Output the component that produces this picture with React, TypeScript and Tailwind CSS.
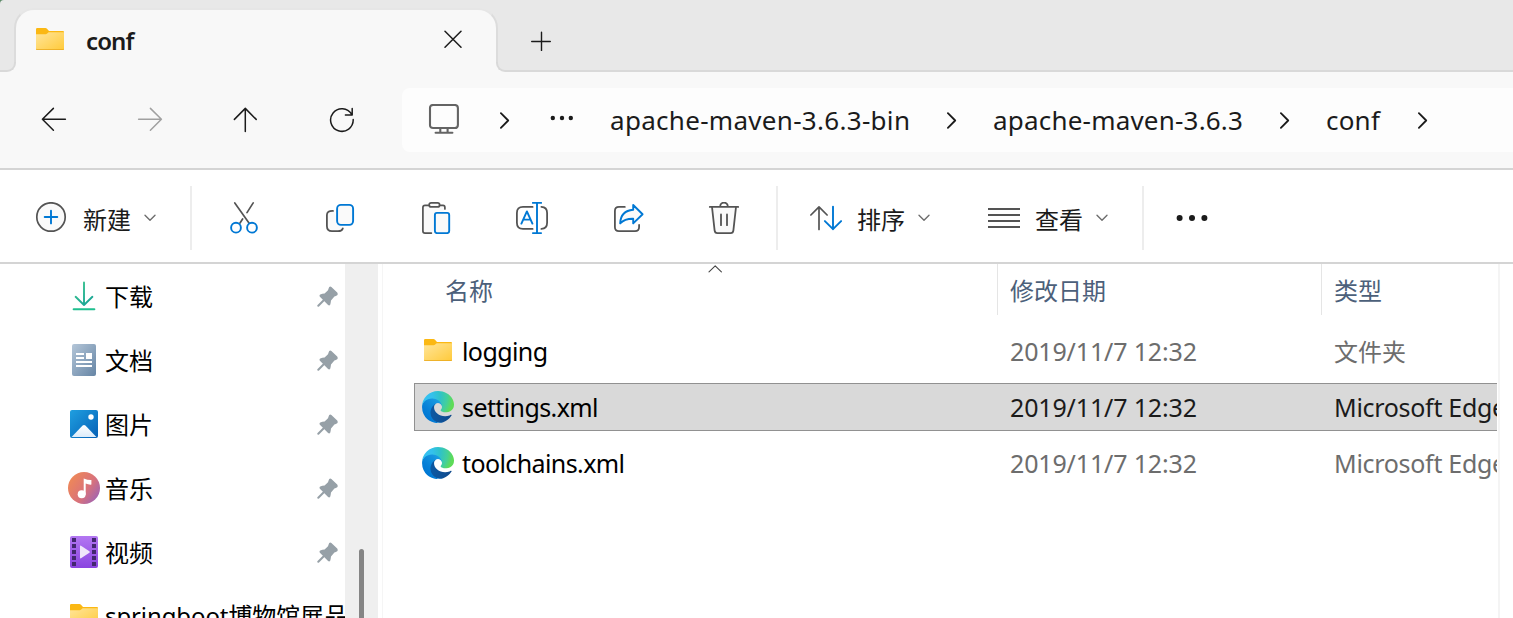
import React from "react";

type IconProps = { children: React.ReactNode; className?: string; w?: number; h?: number };

function Icon({ children, className = "", w = 32, h = 32 }: IconProps) {
  return (
    <svg
      width={w}
      height={h}
      viewBox={`0 0 ${w} ${h}`}
      fill="none"
      strokeLinecap="round"
      strokeLinejoin="round"
      className={`block shrink-0 ${className}`}
    >
      {children}
    </svg>
  );
}

const GREY = "#545454";
const BLUE = "#0078d4";

function FolderIcon({ className = "" }: { className?: string }) {
  return (
    <Icon w={28} h={22} className={className}>
      <defs>
        <linearGradient id="folder" x1="0" y1="0" x2="1" y2="1">
          <stop offset="0" stopColor="#ffe59a" />
          <stop offset="1" stopColor="#ffca3a" />
        </linearGradient>
      </defs>
      <path d="M0 1.2Q0 0 1.2 0H9.5Q10.3 0 11 .7L13 3H27Q28 3 28 4V8H0Z" fill="#fbb813" />
      <path d="M0 6.2H9.6Q10.5 6.2 11.2 5.5L12.6 4.2H28V21Q28 22 27 22H1Q0 22 0 21Z" fill="url(#folder)" />
      <path d="M0 20.6Q.2 21.2 1 21.2H27Q27.8 21.2 28 20.6V21Q28 22 27 22H1Q0 22 0 21Z" fill="#e9a81c" />
    </Icon>
  );
}

function EdgeIcon({ className = "" }: { className?: string }) {
  return (
    <svg width="32" height="32" viewBox="0 0 256 256" className={`block shrink-0 ${className}`}>
      <defs>
        <linearGradient id="edgeDark" x1="63" y1="177" x2="241" y2="177" gradientUnits="userSpaceOnUse">
          <stop offset="0" stopColor="#0c59a4" />
          <stop offset="1" stopColor="#114a8b" />
        </linearGradient>
        <linearGradient id="edgeBlue" x1="157" y1="100" x2="46" y2="221" gradientUnits="userSpaceOnUse">
          <stop offset="0" stopColor="#1b9de2" />
          <stop offset=".16" stopColor="#1595df" />
          <stop offset=".67" stopColor="#0680d7" />
          <stop offset="1" stopColor="#0078d4" />
        </linearGradient>
        <radialGradient id="edgeTop" cx="26" cy="47" r="220" gradientUnits="userSpaceOnUse">
          <stop offset="0" stopColor="#35c1f1" />
          <stop offset=".25" stopColor="#34c1ed" />
          <stop offset=".55" stopColor="#2fc2c8" />
          <stop offset=".8" stopColor="#43cf9c" />
          <stop offset="1" stopColor="#5edb58" />
        </radialGradient>
      </defs>
      <path
        d="M231.1 190.5a93.7 93.7 0 0 1-10.6 4.7 101.9 101.9 0 0 1-35.9 6.5c-47.3 0-88.5-32.6-88.5-74.3a31.5 31.5 0 0 1 16.4-27.3c-42.8 1.8-53.8 46.4-53.8 72.5 0 73.9 68.1 81.4 82.8 81.4 7.9 0 19.8-2.3 27-4.6l1.3-.4a128.3 128.3 0 0 0 66.6-52.8 4 4 0 0 0-5.3-5.7z"
        fill="url(#edgeDark)"
      />
      <path
        d="M105.7 241.4A79.2 79.2 0 0 1 83 220.1a80.7 80.7 0 0 1 29.7-119.4c3.1-1.5 8.5-4.1 15.5-4a32.4 32.4 0 0 1 25.7 13 31.9 31.9 0 0 1 6.4 18.7c0-.2 24.5-79.6-80-79.6-43.9 0-80 41.6-80 78.2a130.2 130.2 0 0 0 12.1 56 128 128 0 0 0 156.4 67.1 75.6 75.6 0 0 1-62.8-8.6z"
        fill="url(#edgeBlue)"
      />
      <path
        d="M152.3 148.9c-.8 1-3.3 2.5-3.3 5.6 0 2.6 1.7 5.1 4.7 7.2 14.4 10 41.5 8.7 41.6 8.7a59.6 59.6 0 0 0 30.3-8.3 61.4 61.4 0 0 0 30.4-52.9c.3-22.4-8-37.3-11.3-43.9C223.5 23.8 177.7 0 128 0A128 128 0 0 0 0 126.2c.5-36.5 36.8-66 80-66 3.5 0 23.5.3 42 10 16.3 8.6 24.9 18.9 30.9 29.2 6.2 10.7 7.2 24.1 7.2 29.5s-2.7 13.3-7.8 20z"
        fill="url(#edgeTop)"
      />
    </svg>
  );
}

function PinIcon() {
  return (
    <Icon w={21} h={21}>
      <path d="M1.3 19.7L8 13" stroke="#96a0a7" strokeWidth="2" />
      <path
        d="M12.2 1Q13.3 .1 14.4 1L20.2 6.6Q21.2 8 20.2 9.2Q18.8 9.8 17.4 10.6L14 14.6Q13.8 16.8 13.2 18.8Q12.3 19.9 11.1 19L2.9 10.8Q2 9.6 3.2 8.6Q5.4 7.8 7.6 7.6L11 4.2Q11.6 2.4 12.2 1Z"
        fill="#96a0a7"
      />
    </Icon>
  );
}

function Chevron({ className = "" }: { className?: string }) {
  return (
    <Icon w={10} h={17} className={className}>
      <path d="M.9 1.2L8.2 8.5L.9 15.8" stroke="#1b1b1b" strokeWidth="1.8" />
    </Icon>
  );
}

function SmallChevron() {
  return (
    <Icon w={12} h={8} className="ml-3">
      <path d="M1 1.2L6 6.2L11 1.2" stroke="#6d6d6d" strokeWidth="1.4" />
    </Icon>
  );
}

function Separator() {
  return <div className="h-16 w-0.5 shrink-0 bg-[#ededed]" />;
}

function TabStrip() {
  return (
    <div className="relative flex h-[72px] flex-col bg-[#f8f8f8]">
      <div className="h-[62px] bg-[#e8e8e8] pt-2">
        <div className="flex h-[54px] items-start">
          <div className="ml-3.5 flex h-[54px] w-[484px] items-start rounded-t-[20px] border-2 border-b-0 border-[#dcdcdc] border-t-[#e6e6e6] bg-[#f8f8f8]">
            <FolderIcon className="mt-[18px] ml-5" />
            <span className="mt-[13px] ml-[22px] w-[358px] text-[24px] leading-[36px] font-semibold tracking-[-0.9px] text-[#1b1b1b]">
              conf
            </span>
            <Icon w={18} h={18} className="mt-5">
              <path d="M1 1.2L17 17.2M17 1.2L1 17.2" stroke="#1b1b1b" strokeWidth="1.5" />
            </Icon>
          </div>
          <Icon w={20} h={20} className="mt-[23px] ml-[33px]">
            <path d="M.7 10.5H19.3M10.5 1.2V19.6" stroke="#1b1b1b" strokeWidth="1.4" />
          </Icon>
        </div>
      </div>
      <div className="flex h-2.5">
        <div className="w-4 rounded-br-[9px] border-r-2 border-b-2 border-[#d9d9d9] bg-[#e8e8e8]" />
        <div className="w-[480px]" />
        <div className="flex-1 rounded-bl-[9px] border-b-2 border-l-2 border-[#d9d9d9] bg-[#e8e8e8]" />
      </div>
      <div className="absolute top-0 left-0 h-2 w-1 bg-[#5c8a68]">
        <div className="h-full w-full rounded-tl-[12px] bg-[#e8e8e8]" />
      </div>
    </div>
  );
}

function NavBar() {
  return (
    <div className="flex h-[98px] items-start border-b-2 border-[#d4d4d4] bg-[#f8f8f8] pt-4">
      <div className="flex w-[402px] shrink-0 items-center pt-[19px] pl-[41px]">
        <Icon w={26} h={26}>
          <path d="M1.4 12.3H24.4M12.4 1.4L1.4 12.3L12.4 23.2" stroke="#1b1b1b" strokeWidth="1.5" />
        </Icon>
        <Icon w={26} h={26} className="ml-[70px]">
          <path d="M1.6 12.3H24.4M13.4 1.4L24.4 12.3L13.4 23.2" stroke="#a0a0a0" strokeWidth="1.5" />
        </Icon>
        <Icon w={26} h={26} className="ml-[69px]">
          <path d="M13.3 1.4V24.4M2.4 12.4L13.3 1.4L24.2 12.4" stroke="#1b1b1b" strokeWidth="1.5" />
        </Icon>
        <Icon w={26} h={26} className="ml-[71px]">
          <path d="M24.2 12.6A11.3 11.3 0 1 1 22.6 7.2M23.2 1.6V7.9H16.4" stroke="#1b1b1b" strokeWidth="1.5" />
        </Icon>
      </div>
      <div className="flex h-16 flex-1 items-center overflow-hidden rounded-l-lg bg-[#fdfdfd] pl-[26px] text-[26px] whitespace-nowrap text-[#1b1b1b]">
        <Icon>
          <path
            d="M6 1H26.8Q29.9 1 29.9 4.1V20.9Q29.9 24 26.8 24H5.1Q2 24 2 20.9V4.1Q2 1 5.1 1ZM12.3 24V28.6M19.6 24V28.6M7.6 28.8H24.4"
            stroke="#646464"
            strokeWidth="2.1"
          />
        </Icon>
        <Chevron className="ml-[40px]" />
        <Icon w={24} h={6} className="mb-1 ml-[40px]">
          <g fill="#1b1b1b">
            <circle cx="2.8" cy="3" r="2.2" />
            <circle cx="12" cy="3" r="2.2" />
            <circle cx="20.8" cy="3" r="2.2" />
          </g>
        </Icon>
        <span className="ml-[36px] w-[301px] tracking-[0.3px]">apache-maven-3.6.3-bin</span>
        <Chevron className="ml-[36px]" />
        <span className="ml-[36px] w-[250px] tracking-[0.2px]">apache-maven-3.6.3</span>
        <Chevron className="ml-[37px]" />
        <span className="ml-[36px] w-[55px] tracking-[0.2px]">conf</span>
        <Chevron className="ml-[37px]" />
      </div>
    </div>
  );
}

function Toolbar() {
  return (
    <div className="flex h-[94px] items-center border-b-2 border-[#d4d4d4] bg-white pt-1 text-[24px] text-[#1b1b1b]">
      <Icon className="ml-[35px]">
        <circle cx="16" cy="15" r="14.2" stroke={GREY} strokeWidth="1.7" fill="#fafafa" />
        <path d="M16 8.8V21.4M9.7 15H22.3" stroke={BLUE} strokeWidth="1.9" />
      </Icon>
      <span className="mt-[3px] ml-4 w-[49px] leading-9">新建</span>
      <SmallChevron />
      <div className="ml-[34px]">
        <Separator />
      </div>
      <Icon className="ml-9">
        <path d="M6.8 .9L21 21M25.2 .9L19 10.6M14.6 17L12 21" stroke={GREY} strokeWidth="1.7" />
        <circle cx="8" cy="25.7" r="4.9" stroke={BLUE} strokeWidth="1.9" />
        <circle cx="24" cy="25.7" r="4.9" stroke={BLUE} strokeWidth="1.9" />
      </Icon>
      <Icon className="ml-16">
        <path d="M9 8.9Q2.9 8.7 2.9 13V24Q2.9 29.1 8 29.1H14Q18 29.1 18.8 26.4" stroke={GREY} strokeWidth="1.8" fill="#fafafa" />
        <rect x="13.1" y="2.9" width="16" height="20" rx="3.8" stroke={BLUE} strokeWidth="1.9" fill="#fafafa" />
      </Icon>
      <Icon className="ml-16">
        <path d="M11.4 31.1H5Q2.9 31.1 2.9 29V5.4Q2.9 3.3 5 3.3H23Q24.9 3.3 24.9 5.4V7" stroke={GREY} strokeWidth="1.7" fill="#fafafa" />
        <rect x="9.2" y=".9" width="10.4" height="4" rx="2" stroke={GREY} strokeWidth="1.7" fill="#fafafa" />
        <rect x="14.9" y="10.9" width="14.3" height="20.2" rx="2" stroke={BLUE} strokeWidth="1.9" fill="#fafafa" />
      </Icon>
      <Icon className="ml-16">
        <path
          d="M16.6 4.9H7Q.9 4.9 .9 11V20.8Q.9 26.9 7 26.9H16.6M25.4 4.9Q31.1 5.1 31.1 11V20.8Q31.1 26.7 25.4 26.9"
          stroke={GREY}
          strokeWidth="1.8"
        />
        <path d="M16.9 .9H25.1M21 .9V31.1M16.9 31.1H25.1M5.4 21.6L10.9 9.4L16.4 21.6M7.2 17.6H14.6" stroke={BLUE} strokeWidth="1.9" />
      </Icon>
      <Icon className="ml-16">
        <path d="M12.8 4.9H7Q2.9 4.9 2.9 9V25Q2.9 29.1 7 29.1H23Q27.1 29.1 27.1 25V23" stroke={GREY} strokeWidth="1.8" />
        <path
          d="M21.2 3L30.6 12.2L21.2 21.4V16.8Q12.8 16.6 8.2 21.4Q8.6 8.8 21.2 7.8Z"
          stroke={BLUE}
          strokeWidth="1.9"
          fill="#fafafa"
        />
      </Icon>
      <Icon className="ml-16">
        <path
          d="M4 5L6.6 28.4Q6.9 31.1 9.4 31.1H22.6Q25.1 31.1 25.4 28.4L28 5"
          stroke={GREY}
          strokeWidth="1.8"
          fill="#fafafa"
        />
        <path d="M1.8 4.9H30.2M12.2 4.4A3.8 3.8 0 0 1 19.8 4.4M13 12.4V23.2M19 12.4V23.2" stroke={GREY} strokeWidth="1.8" />
      </Icon>
      <div className="ml-9">
        <Separator />
      </div>
      <Icon className="ml-8">
        <path d="M9 4.9V27.4M.9 13L9 4.9L17.1 13" stroke={GREY} strokeWidth="1.7" />
        <path d="M23 4.6V27.2M14.9 19.1L23 27.2L31.1 19.1" stroke={BLUE} strokeWidth="1.9" />
      </Icon>
      <span className="mt-[3px] ml-[15px] w-[49px] leading-9">排序</span>
      <SmallChevron />
      <Icon className="ml-[58px]">
        <path d="M0 7H32M0 13H32M0 19H32M0 25H32" stroke={GREY} strokeWidth="1.9" strokeLinecap="butt" />
      </Icon>
      <span className="mt-[3px] ml-[15px] w-[49px] leading-9">查看</span>
      <SmallChevron />
      <div className="ml-[34px]">
        <Separator />
      </div>
      <Icon className="ml-8">
        <g fill="#1b1b1b">
          <circle cx="3.6" cy="16" r="3" />
          <circle cx="16" cy="16" r="3" />
          <circle cx="28.4" cy="16" r="3" />
        </g>
      </Icon>
    </div>
  );
}

const downloads = (
  <Icon>
    <defs>
      <linearGradient id="dl" x1="6" y1="2" x2="26" y2="24" gradientUnits="userSpaceOnUse">
        <stop offset="0" stopColor="#41c98e" />
        <stop offset="1" stopColor="#13a096" />
      </linearGradient>
    </defs>
    <path d="M16 2.5V25M7.6 16.8L16 25L24.4 16.8" stroke="url(#dl)" strokeWidth="1.9" />
    <path d="M5.6 29.2H26.4" stroke="#1fbf8f" strokeWidth="1.9" />
  </Icon>
);

const documents = (
  <Icon>
    <defs>
      <linearGradient id="doc" x1="0" y1="0" x2="1" y2="1">
        <stop offset="0" stopColor="#b4c6d8" />
        <stop offset="1" stopColor="#6685a5" />
      </linearGradient>
    </defs>
    <rect x="4" y="0" width="24" height="32" rx="2" fill="url(#doc)" />
    <path d="M8 10H16M8 14H16M8 18H24M8 22H24" stroke="#fff" strokeWidth="2" strokeLinecap="butt" />
    <rect x="18" y="9" width="6" height="6" fill="#fff" />
  </Icon>
);

const pictures = (
  <Icon>
    <defs>
      <linearGradient id="pic" x1="0" y1="0" x2="1" y2="1">
        <stop offset="0" stopColor="#1f9fe0" />
        <stop offset="1" stopColor="#0560b6" />
      </linearGradient>
      <linearGradient id="hill" x1="0" y1="0" x2="0" y2="1">
        <stop offset="0" stopColor="#fff" />
        <stop offset="1" stopColor="#dcecfa" />
      </linearGradient>
    </defs>
    <rect x="2" y="2" width="28" height="28" rx="2" fill="url(#pic)" />
    <path d="M3.6 29L14.6 17.6Q16 16.3 17.4 17.6L28.4 29Z" fill="url(#hill)" />
    <circle cx="23" cy="9" r="2.7" fill="#fff" />
  </Icon>
);

const music = (
  <Icon>
    <defs>
      <linearGradient id="mus" x1="0" y1=".2" x2="1" y2=".9">
        <stop offset="0" stopColor="#f08a55" />
        <stop offset=".55" stopColor="#d9727a" />
        <stop offset="1" stopColor="#9561bd" />
      </linearGradient>
    </defs>
    <circle cx="16" cy="16" r="16" fill="url(#mus)" />
    <circle cx="13.7" cy="22.3" r="4" fill="#fff" />
    <path d="M15.7 6.4Q20 8.2 23.4 8V12.6Q20.4 12.8 17.7 11.6V22.6H15.7Z" fill="#fff" />
  </Icon>
);

const videos = (
  <Icon>
    <defs>
      <linearGradient id="vid" x1="0" y1="0" x2="0" y2="1">
        <stop offset="0" stopColor="#b377f2" />
        <stop offset="1" stopColor="#8a44e0" />
      </linearGradient>
    </defs>
    <rect x="2" y="0" width="28" height="32" rx="2" fill="url(#vid)" />
    <path d="M6 2V30M26 2V30" stroke="#43276f" strokeWidth="4" strokeDasharray="4 2" strokeLinecap="butt" />
    <path d="M12 10.4Q12 9.2 13 9.8L21.4 15.2Q22.2 16 21.4 16.8L13 22.2Q12 22.8 12 21.6Z" fill="#efe6fa" />
  </Icon>
);

const quickAccess = [
  { name: "下载", icon: downloads },
  { name: "文档", icon: documents },
  { name: "图片", icon: pictures },
  { name: "音乐", icon: music },
  { name: "视频", icon: videos },
];

function Sidebar() {
  return (
    <div className="flex w-[383px] shrink-0 overflow-hidden border-r border-[#f5f5f5]">
      <div className="w-[345px] shrink-0 overflow-hidden">
        {quickAccess.map((item) => (
          <div key={item.name} className="flex h-16 items-center pl-[68px]">
            {item.icon}
            <span className="mt-px ml-[5px] w-[212px] text-[24px] text-black">{item.name}</span>
            <PinIcon />
          </div>
        ))}
        <div className="flex h-16 items-center pl-[70px] whitespace-nowrap">
          <FolderIcon className="mb-[3px]" />
          <span className="ml-[7px] text-[24px] tracking-[-0.1px] text-black">springboot博物馆展品</span>
        </div>
      </div>
      <div className="flex w-[33px] shrink-0 justify-center bg-[#efefef] pt-[285px]">
        <div className="h-40 w-[5px] rounded-full bg-[#858585]" />
      </div>
    </div>
  );
}

const files = [
  { name: "logging", date: "2019/11/7 12:32", kind: "文件夹", folder: true, selected: false },
  { name: "settings.xml", date: "2019/11/7 12:32", kind: "Microsoft Edge", folder: false, selected: true },
  { name: "toolchains.xml", date: "2019/11/7 12:32", kind: "Microsoft Edge", folder: false, selected: false },
];

function FileList() {
  return (
    <div className="flex w-[1117px] shrink-0 flex-col overflow-hidden border-r-2 border-[#f4f4f4] pl-[31px]">
      <div className="relative flex h-[51px] text-[24px] leading-[54px] text-[#4c607a]">
        <span className="w-[583px] pl-[31px]">名称</span>
        <span className="w-[324px] border-l border-[#e5e5e5] pl-3">修改日期</span>
        <span className="w-[174px] border-l border-[#e5e5e5] pl-3">类型</span>
        <Icon w={14} h={8} className="absolute top-px left-[294px]">
          <path d="M1 6.8L7.2 .9L13.4 6.8" stroke="#444" strokeWidth="1.1" />
        </Icon>
      </div>
      <div className="mt-3 mr-px flex flex-col gap-2">
        {files.map((file) => (
          <div
            key={file.name}
            className={`flex h-12 items-center overflow-hidden border-y border-l text-[25px] whitespace-nowrap ${
              file.selected ? "border-[#919191] bg-[#d9d9d9] text-[#1b1b1b]" : "border-transparent text-[#6d6d6d]"
            }`}
          >
            <span className="flex w-[47px] shrink-0 pl-[7px]">
              {file.folder ? <FolderIcon className="mb-0.5 ml-0.5" /> : <EdgeIcon />}
            </span>
            <span className="w-[548px] shrink-0 pt-0.5 tracking-[-0.6px] text-black">{file.name}</span>
            <span className="w-[324px] shrink-0 pt-0.5 tracking-[-0.15px]">{file.date}</span>
            <span className={`shrink-0 pt-0.5 ${file.folder ? "text-[24px]" : "tracking-[-0.3px]"}`}>{file.kind}</span>
          </div>
        ))}
      </div>
    </div>
  );
}

export default function App() {
  return (
    <div className="flex h-[618px] w-[1513px] flex-col overflow-hidden bg-white font-['Noto_Sans','Noto_Sans_CJK_SC',sans-serif]">
      <TabStrip />
      <NavBar />
      <Toolbar />
      <div className="flex min-h-0 flex-1">
        <Sidebar />
        <FileList />
      </div>
    </div>
  );
}
